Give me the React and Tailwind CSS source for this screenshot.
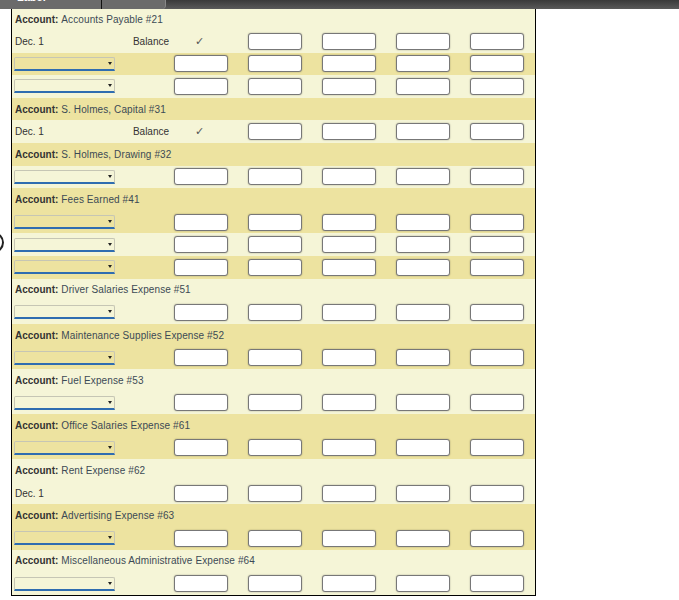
import React from "react";

const L = "bg-[#f5f5d7]";
const D = "bg-[#ede3a0]";

const rows = [
  { type: "head", name: "Accounts Payable #21", bg: L, first: true },
  { type: "bal", bg: L },
  { type: "sel", bg: D },
  { type: "sel", bg: L },
  { type: "head", name: "S. Holmes, Capital #31", bg: D },
  { type: "bal", bg: L },
  { type: "head", name: "S. Holmes, Drawing #32", bg: D },
  { type: "sel", bg: L },
  { type: "head", name: "Fees Earned #41", bg: D },
  { type: "sel", bg: D },
  { type: "sel", bg: L },
  { type: "sel", bg: D },
  { type: "head", name: "Driver Salaries Expense #51", bg: L },
  { type: "sel", bg: L },
  { type: "head", name: "Maintenance Supplies Expense #52", bg: D },
  { type: "sel", bg: D },
  { type: "head", name: "Fuel Expense #53", bg: L },
  { type: "sel", bg: L },
  { type: "head", name: "Office Salaries Expense #61", bg: D },
  { type: "sel", bg: D },
  { type: "head", name: "Rent Expense #62", bg: L },
  { type: "date", bg: L },
  { type: "head", name: "Advertising Expense #63", bg: D },
  { type: "sel", bg: D },
  { type: "head", name: "Miscellaneous Administrative Expense #64", bg: L },
  { type: "sel", bg: L },
];

const Box = () => (
  <div className="w-[54px] h-[17px] shrink-0 bg-white border-[1.5px] border-[#777] rounded-[3px] shadow-[0_0_1.5px_rgba(0,0,0,0.4)]" />
);

const Select = () => (
  <div className="ml-[2px] w-[101px] h-[14px] border border-[#c6c6b4] border-b-2 border-b-[#2f6db0] rounded-t-[2px] flex items-center justify-end pr-[2px]">
    <span className="w-0 h-0 border-l-[2.5px] border-r-[2.5px] border-t-[3px] border-l-transparent border-r-transparent border-t-[#222]" />
  </div>
);

const Row = ({ row }) => {
  const h = row.first ? "h-[21px]" : "h-[22.6px]";
  if (row.type === "head") {
    return (
      <div className={`${h} ${row.bg} flex items-center pl-[3px] text-[#3c4a55]`}>
        <span className="font-bold text-[#333]">Account:</span>
        <span className="ml-[3px] tracking-[0.1px]">{row.name}</span>
      </div>
    );
  }
  return (
    <div className={`${h} ${row.bg} flex items-center`}>
      <div className="w-[162px] shrink-0 flex items-center">
        {row.type === "sel" && <Select />}
        {row.type !== "sel" && <span className="pl-[3px] text-[#333]">Dec. 1</span>}
        {row.type === "bal" && <span className="ml-[89px] text-[#333]">Balance</span>}
      </div>
      <div className="flex gap-[20px]">
        {row.type === "bal" ? (
          <div className="w-[54px] shrink-0 flex justify-center pr-[4px] text-[#555] text-[11px]">✓</div>
        ) : (
          <Box />
        )}
        <Box />
        <Box />
        <Box />
        <Box />
      </div>
    </div>
  );
};

export default function App() {
  return (
    <div className="w-[679px] h-[600px] bg-white overflow-hidden font-['Liberation_Sans',Arial,sans-serif] text-[10px]">
      <div className="h-[9px] flex bg-gradient-to-b from-[#3a3a3a] to-[#5a5a5a]">
        <div className="w-[101px] bg-[#6b6b6b] overflow-hidden">
          <div className="pl-[17px] -mt-[9px] text-white font-bold text-[11px] leading-[12px]">Label</div>
        </div>
        <div className="w-px bg-[#111]" />
        <div className="w-[64px] bg-[#6b6b6b] rounded-br-[4px] border-r border-[#888]" />
      </div>
      <div className="flex">
        <div className="w-[11px] relative overflow-hidden">
          <div className="absolute top-[223px] -left-[17px] w-[21px] h-[21px] rounded-full border-[2.5px] border-[#222]" />
        </div>
        <div className="w-[525px] border-l border-r border-b border-black">
          {rows.map((r, i) => (
            <Row key={i} row={r} />
          ))}
        </div>
      </div>
    </div>
  );
}
